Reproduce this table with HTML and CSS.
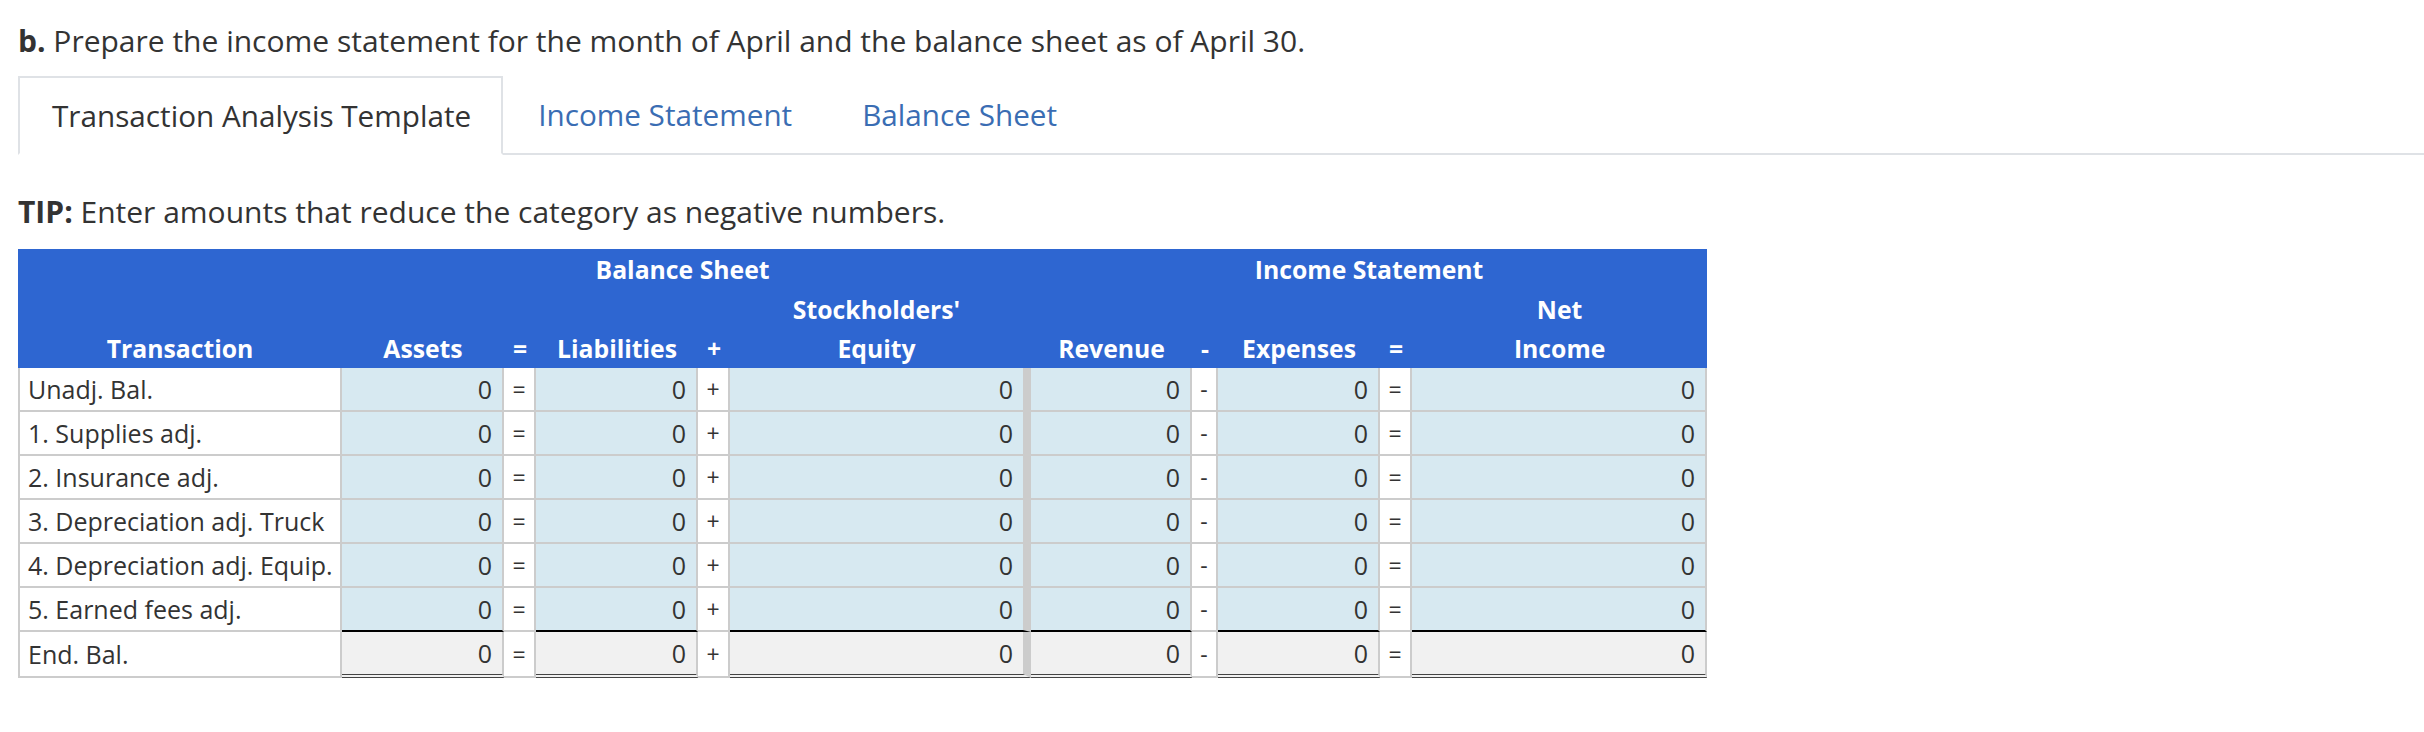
FILE: index.html
```html
<!DOCTYPE html>
<html lang="en">
<head>
<meta charset="utf-8">
<title>Transaction Analysis Template</title>
<link rel="stylesheet" href="styles.css">
</head>
<body>
<div class="page">
  <p class="prompt"><strong>b.</strong> Prepare the income statement for the month of April and the balance sheet as of April 30.</p>

  <div class="tabs">
    <div class="tab active">Transaction Analysis Template</div>
    <div class="tab">Income Statement</div>
    <div class="tab">Balance Sheet</div>
    <div class="tab-fill"></div>
  </div>

  <p class="tip"><strong>TIP:</strong> Enter amounts that reduce the category as negative numbers.</p>

  <table class="grid">
    <colgroup>
      <col class="c-trans">
      <col class="c-val">
      <col class="c-op">
      <col class="c-val">
      <col class="c-op">
      <col class="c-eq">
      <col class="c-rev">
      <col class="c-op-narrow">
      <col class="c-val">
      <col class="c-op">
      <col class="c-net">
    </colgroup>
    <thead>
      <tr class="h1">
        <th></th>
        <th colspan="5" class="bs-title">Balance Sheet</th>
        <th colspan="5">Income Statement</th>
      </tr>
      <tr class="h2">
        <th></th>
        <th colspan="4"></th>
        <th class="eq-head">Stockholders'</th>
        <th colspan="4"></th>
        <th>Net</th>
      </tr>
      <tr class="h3">
        <th>Transaction</th>
        <th>Assets</th>
        <th>=</th>
        <th>Liabilities</th>
        <th>+</th>
        <th class="eq-head">Equity</th>
        <th>Revenue</th>
        <th>-</th>
        <th>Expenses</th>
        <th>=</th>
        <th>Income</th>
      </tr>
    </thead>
    <tbody>
      <tr>
        <td class="name">Unadj. Bal.</td>
        <td class="val">0</td><td class="op">=</td><td class="val">0</td><td class="op">+</td><td class="val eq">0</td>
        <td class="val">0</td><td class="op">-</td><td class="val">0</td><td class="op">=</td><td class="val">0</td>
      </tr>
      <tr>
        <td class="name">1. Supplies adj.</td>
        <td class="val">0</td><td class="op">=</td><td class="val">0</td><td class="op">+</td><td class="val eq">0</td>
        <td class="val">0</td><td class="op">-</td><td class="val">0</td><td class="op">=</td><td class="val">0</td>
      </tr>
      <tr>
        <td class="name">2. Insurance adj.</td>
        <td class="val">0</td><td class="op">=</td><td class="val">0</td><td class="op">+</td><td class="val eq">0</td>
        <td class="val">0</td><td class="op">-</td><td class="val">0</td><td class="op">=</td><td class="val">0</td>
      </tr>
      <tr>
        <td class="name">3. Depreciation adj. Truck</td>
        <td class="val">0</td><td class="op">=</td><td class="val">0</td><td class="op">+</td><td class="val eq">0</td>
        <td class="val">0</td><td class="op">-</td><td class="val">0</td><td class="op">=</td><td class="val">0</td>
      </tr>
      <tr>
        <td class="name">4. Depreciation adj. Equip.</td>
        <td class="val">0</td><td class="op">=</td><td class="val">0</td><td class="op">+</td><td class="val eq">0</td>
        <td class="val">0</td><td class="op">-</td><td class="val">0</td><td class="op">=</td><td class="val">0</td>
      </tr>
      <tr class="last-adj">
        <td class="name">5. Earned fees adj.</td>
        <td class="val">0</td><td class="op">=</td><td class="val">0</td><td class="op">+</td><td class="val eq">0</td>
        <td class="val">0</td><td class="op">-</td><td class="val">0</td><td class="op">=</td><td class="val">0</td>
      </tr>
      <tr class="total">
        <td class="name">End. Bal.</td>
        <td class="val">0</td><td class="op">=</td><td class="val">0</td><td class="op">+</td><td class="val eq">0</td>
        <td class="val">0</td><td class="op">-</td><td class="val">0</td><td class="op">=</td><td class="val">0</td>
      </tr>
    </tbody>
  </table>
</div>
</body>
</html>
```

FILE: styles.css
```css
html, body {
  margin: 0;
  padding: 0;
  background: #ffffff;
}

body {
  font-family: "Open Sans", "Noto Sans", "Liberation Sans", sans-serif;
  color: #333333;
}

.page {
  padding: 20px 0 0 18px;
}

.prompt {
  margin: 0;
  font-size: 30px;
  line-height: 42px;
}

.prompt strong,
.tip strong {
  font-weight: 700;
}

.tabs {
  display: flex;
  margin-top: 14px;
  height: 79px;
}

.tab {
  display: flex;
  align-items: center;
  padding: 0 35px 0 35px;
  font-size: 29.7px;
  color: #3a6db3;
  border-bottom: 2px solid #dfe2e6;
}

.tab.active {
  color: #333333;
  border: 2px solid #dfe2e6;
  border-bottom: 2px solid #ffffff;
  padding: 0 30px 0 32px;
}

.tab-fill {
  flex: 1;
  border-bottom: 2px solid #dfe2e6;
}

.tip {
  margin: 37px 0 0 0;
  font-size: 30px;
  line-height: 40px;
}

.grid {
  margin-top: 17px;
  border-collapse: separate;
  border-spacing: 0;
  table-layout: fixed;
  width: 1689px;
  font-size: 25px;
}

.c-trans { width: 324px; }
.c-val { width: 162px; }
.c-op { width: 32px; }
.c-op-narrow { width: 26px; }
.c-eq { width: 301px; }
.c-rev { width: 161px; }
.c-net { width: 295px; }

.grid thead th {
  background: #2e66d1;
  color: #ffffff;
  font-weight: 700;
  font-size: 24.75px;
  padding: 0;
  text-align: center;
  white-space: nowrap;
}

.grid .h1 th { height: 40px; }
.grid .h2 th { height: 40px; }
.grid .h3 th { height: 39px; }

.grid thead th.bs-title,
.grid thead th.eq-head {
  padding-right: 8px;
}

.grid tbody td {
  height: 42px;
  padding: 0;
  border-right: 2px solid #cccccc;
  border-bottom: 2px solid #cccccc;
  white-space: nowrap;
  vertical-align: middle;
}

.grid td.name {
  border-left: 2px solid #cccccc;
  padding-left: 8px;
  background: #ffffff;
}

.grid td.val {
  background: #d7e9f1;
  text-align: right;
  padding-right: 10px;
}

.grid td.val.eq {
  border-right-width: 8px;
}

.grid td.op {
  background: #ffffff;
  text-align: center;
  font-size: 23px;
}

.grid .last-adj td.val {
  border-bottom-color: #000000;
}

.grid .total td.val {
  background: #f1f1f1;
  border-bottom: 4px double #444444;
}

.grid .total td.val.eq {
  border-right-color: #cccccc;
}
```
